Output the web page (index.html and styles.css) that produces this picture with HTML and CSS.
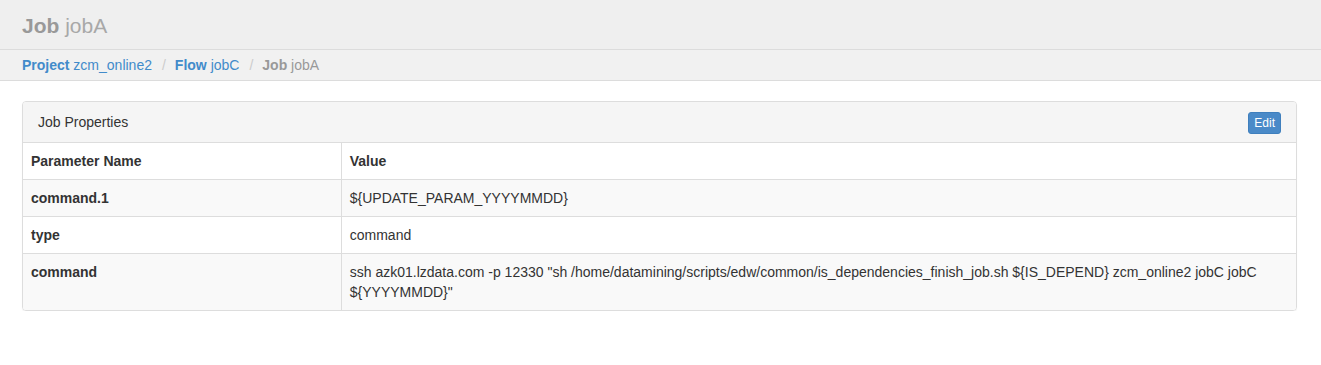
FILE: index.html
```html
<!DOCTYPE html>
<html>
<head>
<meta charset="utf-8">
<link rel="stylesheet" href="styles.css">
</head>
<body>
<div class="page-header">
  <h1 class="title"><span class="title-kind">Job</span> jobA</h1>
</div>
<div class="crumbs">
  <a class="crumb-link" href="#"><b>Project</b> zcm_online2</a>
  <span class="sep">/</span>
  <a class="crumb-link" href="#"><b>Flow</b> jobC</a>
  <span class="sep">/</span>
  <span class="crumb-active"><b>Job</b> jobA</span>
</div>
<div class="content">
  <div class="panel">
    <div class="panel-heading">
      <span>Job Properties</span>
      <button class="btn-edit">Edit</button>
    </div>
    <table class="props">
      <thead>
        <tr><th class="col-name">Parameter Name</th><th>Value</th></tr>
      </thead>
      <tbody>
        <tr class="odd"><td class="pname">command.1</td><td>${UPDATE_PARAM_YYYYMMDD}</td></tr>
        <tr><td class="pname">type</td><td>command</td></tr>
        <tr class="odd"><td class="pname">command</td><td>ssh azk01.lzdata.com -p 12330 "sh /home/datamining/scripts/edw/common/is_dependencies_finish_job.sh ${IS_DEPEND} zcm_online2 jobC jobC ${YYYYMMDD}"</td></tr>
      </tbody>
    </table>
  </div>
</div>
</body>
</html>
```

FILE: styles.css
```css
* { box-sizing: border-box; }
html, body {
  margin: 0;
  padding: 0;
  background: #fff;
  font-family: "Liberation Sans", Arial, sans-serif;
  font-size: 14px;
  line-height: 1.42857;
  color: #333;
}
.page-header {
  background: #efefef;
  border-bottom: 1px solid #dcdcdc;
  height: 50px;
  padding: 2px 22px 0;
  display: flex;
  align-items: center;
}
.title {
  margin: 0;
  font-size: 21px;
  font-weight: normal;
  color: #a8a8a8;
  line-height: 1;
}
.title-kind {
  font-weight: bold;
  color: #999;
}
.crumbs {
  background: #f1f1f1;
  border-bottom: 1px solid #dcdcdc;
  height: 31px;
  padding: 1px 22px 0;
  display: flex;
  align-items: center;
}
.crumb-link {
  color: #428bca;
  text-decoration: none;
}
.crumb-active {
  color: #999;
}
.sep {
  color: #ccc;
  padding: 0 9px 0 10px;
}
.content {
  padding: 20px 24px 0 22px;
}
.panel {
  border: 1px solid #ddd;
  border-radius: 4px;
  box-shadow: 0 1px 1px rgba(0,0,0,.05);
  overflow: hidden;
}
.panel-heading {
  background: #f5f5f5;
  border-bottom: 1px solid #ddd;
  height: 41px;
  padding: 1px 15px 0;
  display: flex;
  align-items: center;
  justify-content: space-between;
  color: #333;
}
.btn-edit {
  font-family: inherit;
  font-size: 12px;
  line-height: 1.5;
  padding: 1px 5px;
  color: #fff;
  background: #4a8ac8;
  border: 1px solid #3f7fbd;
  border-radius: 3px;
}
.props {
  width: 100%;
  border-collapse: collapse;
}
.props th, .props td {
  padding: 9px 8px 7px;
  text-align: left;
  vertical-align: top;
  border-top: 1px solid #ddd;
  border-left: 1px solid #ddd;
}
.props th:first-child, .props td:first-child {
  border-left: none;
}
.props thead th {
  border-top: none;
  font-weight: bold;
}
.col-name { width: 25%; }
.pname { font-weight: bold; }
.props tr.odd td { background: #f9f9f9; }
```
